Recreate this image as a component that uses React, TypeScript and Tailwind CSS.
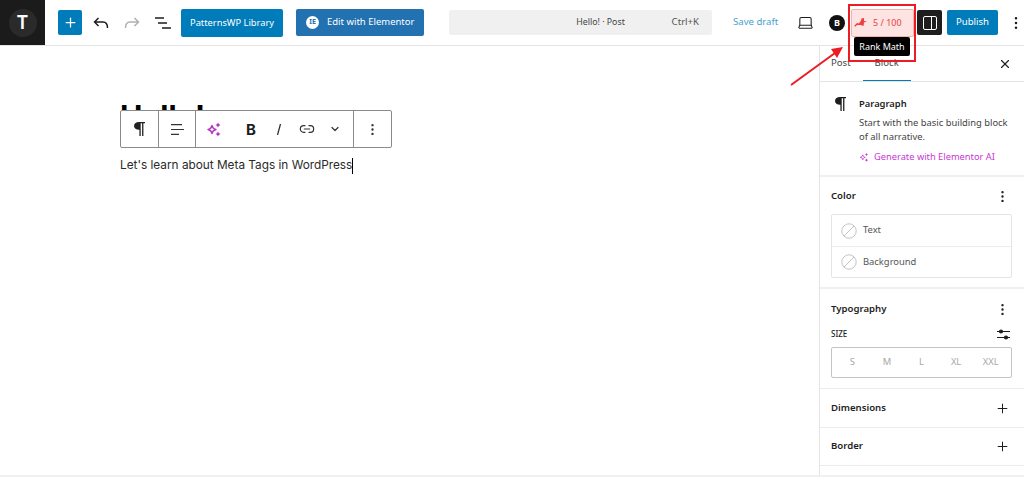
import { Plus, X, EllipsisVertical, Laptop, Link2, ChevronDown } from 'lucide-react'

function Sparkles({ size = 16 }: { size?: number }) {
  return (
    <svg width={size} height={size} viewBox="0 0 16 16" fill="none" stroke="currentColor" strokeWidth="1.4" strokeLinejoin="round">
      <path d="M6 4.5 C6.5 7 7.5 8 10 8.500 C7.500 9 6.500 10 6 12.500 C5.500 10 4.500 9 2 8.500 C4.500 8 5.500 7 6 4.500Z" />
      <path d="M12 1.500 l.9 1.600 1.600.9 -1.600.9 -.9 1.600 -.9-1.600 -1.600-.9 1.600-.9z" fill="currentColor" stroke="none" />
      <path d="M12 10.500 l.9 1.600 1.600.9 -1.600.9 -.9 1.600 -.9-1.600 -1.600-.9 1.600-.9z" fill="currentColor" stroke="none" />
    </svg>
  )
}

function Pilcrow({ className }: { className?: string }) {
  return (
    <svg width="11" height="14" viewBox="0 0 11 14" fill="currentColor" className={className}>
      <path d="M5 0H11V1.300H9.400V14H8.100V1.300H6.700V14H5.400V7.800H5C2.200 7.800 0 6.100 0 3.900S2.200 0 5 0Z" />
    </svg>
  )
}

function Arrow({ flip, className }: { flip?: boolean; className?: string }) {
  return (
    <svg width="16" height="12" viewBox="0 0 16 12" fill="none" stroke="currentColor" strokeWidth="1.500" className={className} style={flip ? { transform: 'scaleX(-1)' } : undefined}>
      <path d="M5.500 1 1.500 5 5.500 9M1.500 5H10C13 5 14.500 7 14.500 11" />
    </svg>
  )
}

function ListView() {
  return (
    <svg width="16" height="12" viewBox="0 0 16 12" stroke="#1e1e1e" strokeWidth="1.500">
      <path d="M0 1h9M3 6h9M7 11h9" />
    </svg>
  )
}

function NoColor() {
  return (
    <svg width="16" height="16" viewBox="0 0 16 16" fill="none" stroke="#c4c4c4" strokeWidth="1">
      <circle cx="8" cy="8" r="7.200" />
      <path d="M3 13 13 3" />
    </svg>
  )
}

function RankMathIcon() {
  return (
    <svg width="13" height="9" viewBox="0 0 13 9" fill="#e8413f" className="shrink-0">
      <path d="M0 8 3 5 5 5.500 7 2.500 7.500 0.500 10 0 10 3 13 3.500 10 4.500 9.500 8 6.500 7 3 7 1.500 8.500Z" />
    </svg>
  )
}

function Sliders() {
  return (
    <svg width="13" height="11" viewBox="0 0 13 11" fill="none" stroke="#1e1e1e" strokeWidth="1.200">
      <path d="M0 2.500h13M0 8.500h13" />
      <circle cx="4" cy="2.500" r="1.500" fill="#1e1e1e" />
      <circle cx="9" cy="8.500" r="1.500" fill="#1e1e1e" />
    </svg>
  )
}

function Panel({ title, className }: { title: string; className: string }) {
  return (
    <section className={`flex items-center justify-between shrink-0 pl-[11px] pr-[14px] border-b border-[#ececec] ${className}`}>
      <h3 className="text-[9.600px] font-semibold text-[#1e1e1e]">{title}</h3>
      <Plus size={15} strokeWidth={1.600} />
    </section>
  )
}

export default function App() {
  return (
    <div className="relative flex flex-col w-[1024px] h-[477px] overflow-hidden bg-white text-[#1e1e1e] font-['Noto_Sans',sans-serif]">
      {/* Top bar */}
      <header className="flex items-center h-[46px] shrink-0 border-b border-[#e4e4e4] whitespace-nowrap">
        <div className="flex items-center justify-center w-[45px] h-[45px] shrink-0 bg-[#1b1b1b]">
          <div className="flex items-center justify-center w-7 h-7 rounded-full bg-[#2a2a2a] text-white text-[19px] font-semibold">T</div>
        </div>
        <button className="flex items-center justify-center w-[24px] h-[25px] shrink-0 ml-[13px] rounded-[2px] bg-[#007cba] text-white">
          <Plus size={15} strokeWidth={2} />
        </button>
        <Arrow className="ml-[11px] shrink-0 text-[#1e1e1e]" />
        <Arrow flip className="ml-[15px] shrink-0 text-[#b0b0b0]" />
        <div className="ml-[15px] shrink-0"><ListView /></div>
        <button className="w-[102px] h-[28px] shrink-0 ml-[10px] rounded-[2px] bg-[#007cba] text-white text-[9.300px]">PatternsWP Library</button>
        <button className="flex items-center w-[128px] h-[27px] shrink-0 ml-[13px] pl-[10px] rounded-[2px] bg-[#2271b1] text-white text-[9.500px]">
          <span className="flex items-center justify-center w-[13px] h-[13px] rounded-full bg-white text-[#2271b1] text-[7px] font-bold">IE</span>
          <span className="ml-[8px]">Edit with Elementor</span>
        </button>
        <div className="relative flex items-center justify-center w-[263px] h-[25px] shrink-0 ml-[25px] pl-[40px] rounded-[2px] bg-[#f0f0f0] text-[8.800px] text-[#444]">
          Hello! · Post
          <span className="absolute right-[13px] text-[9.600px] text-[#555]">Ctrl+K</span>
        </div>
        <span className="w-[45px] shrink-0 ml-[21px] text-[9.600px] text-[#4a9fd0]">Save draft</span>
        <Laptop size={17} strokeWidth={1.500} className="ml-[19px] shrink-0" />
        <span className="flex items-center justify-center w-[16px] h-[16px] shrink-0 ml-[15px] rounded-full bg-[#111] text-white text-[9px] font-bold">B</span>
        <button className="flex items-center w-[63px] h-[28px] shrink-0 ml-[6px] pl-[2px] rounded-[2px] border border-[#f2b3b0] bg-[#fde4e2] text-[#e8413f] text-[9px]">
          <RankMathIcon />
          <span className="ml-[6px]">5 / 100</span>
        </button>
        <button className="flex items-center justify-center w-[25px] h-[25px] shrink-0 ml-[3px] rounded-[2px] bg-[#1e1e1e]">
          <span className="flex justify-end w-[14px] h-[14px] rounded-[2px] border border-white">
            <span className="w-[5px] border-l border-white" />
          </span>
        </button>
        <button className="w-[51px] h-[25px] shrink-0 ml-[5px] rounded-[2px] bg-[#007cba] text-white text-[9.600px]">Publish</button>
        <EllipsisVertical size={16} strokeWidth={1.800} className="ml-[10px] shrink-0" />
      </header>

      <div className="flex flex-1 min-h-0">
        {/* Canvas */}
        <main className="relative flex-1 min-w-0 pl-[120px] pt-[47px] font-['Inter',sans-serif] overflow-hidden">
          <h1 className="h-[52px] overflow-hidden text-[30px] leading-[46px] font-bold text-black">Hello!</h1>
          <p className="mt-[13px] flex items-center h-[16px] text-[11.800px] text-[#2a2a2a]">
            Let's learn about Meta Tags in WordPress
            <span className="w-px h-[16px] bg-black" />
          </p>

          {/* Floating block toolbar */}
          <div className="absolute left-[120px] top-[64px] flex items-center h-[38px] w-[272px] rounded-[2px] border border-[#8a8a8a] bg-white">
            <div className="flex items-center justify-center w-[38px] h-full border-r border-[#8a8a8a]">
              <Pilcrow className="text-[#222]" />
            </div>
            <div className="flex items-center justify-center w-[37px] h-full border-r border-[#8a8a8a]">
              <svg width="13" height="11" viewBox="0 0 13 11" stroke="#333" strokeWidth="1.200"><path d="M0 .6h11M0 5.500h13M0 10.400h8" /></svg>
            </div>
            <div className="flex items-center w-[158px] h-full border-r border-[#8a8a8a]">
              <span className="ml-[10px] text-[#b53bc4]"><Sparkles size={16} /></span>
              <span className="ml-[24px] text-[15px] font-bold leading-none">B</span>
              <svg width="6" height="11" viewBox="0 0 6 11" stroke="#333" strokeWidth="1.300" className="ml-[20px]"><path d="M4.500 0 1.500 11" /></svg>
              <Link2 size={16} strokeWidth={1.800} className="ml-[17px] text-[#333]" />
              <ChevronDown size={12} strokeWidth={2.400} className="ml-[14px] text-[#333]" />
            </div>
            <EllipsisVertical size={15} strokeWidth={1.800} className="ml-[11px] text-[#333]" />
          </div>
        </main>

        {/* Settings sidebar */}
        <aside className="flex flex-col w-[205px] shrink-0 border-l border-[#e4e4e4]">
          <div className="relative flex items-center h-[36px] shrink-0 pl-[11px] border-b border-[#e4e4e4] text-[9.600px] text-[#444]">
            <span>Post</span>
            <span className="flex items-center justify-center w-[48px] h-full ml-[12px] border-b border-[#007cba]">Block</span>
            <X size={14} strokeWidth={2} className="absolute right-[12px] top-[11px] text-[#1e1e1e]" />
          </div>

          <section className="flex h-[95px] shrink-0 pl-[15px] pt-[15px] border-b-2 border-[#f0f0f0]">
            <Pilcrow />
            <div className="ml-[13px]">
              <h2 className="text-[9.400px] leading-[14px] font-semibold">Paragraph</h2>
              <p className="mt-[5px] w-[155px] text-[9.400px] leading-[14px] text-[#444]">Start with the basic building block of all narrative.</p>
              <div className="flex items-center mt-[6px] text-[9.300px] text-[#c936d6]">
                <Sparkles size={10} />
                <span className="ml-[5px] whitespace-nowrap">Generate with Elementor AI</span>
              </div>
            </div>
          </section>

          <section className="h-[112px] shrink-0 pl-[11px] pr-[12px] pt-[9px] border-b-2 border-[#f0f0f0]">
            <div className="flex items-center justify-between h-[20px] pr-[2px]">
              <h3 className="text-[9.600px] font-semibold">Color</h3>
              <EllipsisVertical size={15} strokeWidth={1.800} />
            </div>
            <div className="mt-[8px] w-[181px] rounded-[2px] border border-[#e4e4e4]">
              <div className="flex items-center h-[32px] pl-[9px] border-b border-[#ececec] text-[9.400px] text-[#555]"><NoColor /><span className="ml-[6px]">Text</span></div>
              <div className="flex items-center h-[30px] pl-[9px] text-[9.400px] text-[#555]"><NoColor /><span className="ml-[6px]">Background</span></div>
            </div>
          </section>

          <section className="h-[100px] shrink-0 pl-[11px] pr-[12px] pt-[10px] border-b border-[#ececec]">
            <div className="flex items-center justify-between h-[20px] pr-[2px]">
              <h3 className="text-[9.600px] font-semibold">Typography</h3>
              <EllipsisVertical size={15} strokeWidth={1.800} />
            </div>
            <div className="flex items-center justify-between h-[14px] mt-[8px] pr-[2px]">
              <span className="text-[8px] font-medium">SIZE</span>
              <Sliders />
            </div>
            <div className="grid grid-cols-5 items-center justify-items-center mt-[6px] w-[181px] h-[31px] px-[3px] rounded-[2px] border border-[#c4c4c4] text-[9.400px] text-[#a8a8a8]">
              <span>S</span><span>M</span><span>L</span><span>XL</span><span>XXL</span>
            </div>
          </section>

          <Panel title="Dimensions" className="h-[39px]" />
          <Panel title="Border" className="h-[38px]" />
        </aside>
      </div>

      <div className="h-[2px] shrink-0 bg-[#eef1f1]" />

      {/* Tooltip and screenshot annotation */}
      <div className="absolute left-[854px] top-[37px] flex items-center justify-center w-[56px] h-[19px] rounded-[2px] bg-black text-white text-[9px]">Rank Math</div>
      <div className="absolute left-[848px] top-[4px] w-[68px] h-[58px] border-2 border-[#ec1c24]" />
      <svg className="absolute left-[788px] top-[44px]" width="60" height="44" viewBox="0 0 60 44" fill="none">
        <path d="M3 41 47 9" stroke="#ec1c24" strokeWidth="2" />
        <path d="M55 3 43 5 49 14Z" fill="#ec1c24" />
      </svg>
    </div>
  )
}
